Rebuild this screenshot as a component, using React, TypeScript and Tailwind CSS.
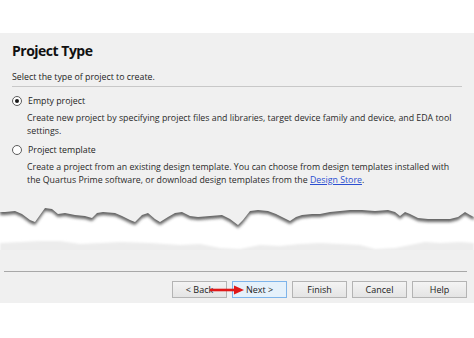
import React from 'react';

const upperEdge: [number, number][] = [
  [0, 17], [5, 17], [15, 16], [22, 19], [30, 25], [35, 27], [40, 20], [45, 13], [52, 14], [58, 19],
  [65, 18], [75, 20], [85, 21], [92, 23], [97, 18], [103, 17], [115, 18], [122, 21], [130, 25], [135, 27],
  [142, 20], [148, 18], [155, 24], [160, 27], [168, 22], [175, 18], [182, 17], [190, 21], [198, 22], [210, 21],
  [222, 20], [230, 24], [238, 30], [243, 25], [250, 16], [258, 15], [268, 16], [276, 19], [282, 22], [290, 26],
  [296, 22], [302, 20], [312, 19], [320, 19], [330, 17], [340, 16], [350, 15], [362, 15], [375, 16], [388, 15],
  [395, 17], [400, 21], [405, 17], [410, 19], [418, 23], [428, 24], [440, 24], [450, 24], [458, 22], [465, 17],
  [470, 20], [474, 22],
];

const lowerEdge: [number, number][] = [
  [0, 48], [20, 47], [40, 46], [60, 46], [80, 49], [100, 48], [120, 47], [150, 48], [180, 50], [200, 49],
  [220, 53], [240, 54], [260, 50], [280, 51], [300, 49], [320, 48], [340, 49], [360, 50], [375, 54], [395, 53],
  [410, 50], [425, 47], [440, 48], [460, 47], [474, 48],
];

const toPoints = (pts: [number, number][]) => pts.map(([x, y]) => `${x},${y}`).join(' ');

// torn paper between the two halves of the dialog
const TornEdge = () => (
  <svg width="474" height="57" viewBox="0 0 474 57" className="block shrink-0">
    <defs>
      <filter id="tearShadow" x="-5%" y="-50%" width="110%" height="200%">
        <feGaussianBlur stdDeviation="1.5" />
      </filter>
      <filter id="softEdge" x="-5%" y="-50%" width="110%" height="200%">
        <feGaussianBlur stdDeviation="1" />
      </filter>
    </defs>
    <rect x="0" y="0" width="474" height="57" fill="#ffffff" />
    <polygon
      points={`0,0 474,0 ${toPoints(upperEdge.map(([x, y]) => [x, y + 3]).reverse() as [number, number][])}`}
      fill="#555555"
      opacity="0.9"
      filter="url(#tearShadow)"
    />
    <polygon points={`0,0 474,0 ${toPoints([...upperEdge].reverse())}`} fill="#f0f0f0" />
    <polygon
      points={`0,57 474,57 ${toPoints([...lowerEdge].reverse())}`}
      fill="#ececec"
      filter="url(#softEdge)"
    />
    <rect x="0" y="55" width="474" height="2" fill="#f0f0f0" />
  </svg>
);

const Radio = ({ checked }: { checked?: boolean }) => (
  <span className="w-[10px] h-[10px] rounded-full border border-[#5c5c5c] bg-white flex items-center justify-center shrink-0">
    {checked && <span className="w-[4px] h-[4px] rounded-full bg-[#1a1a1a]" />}
  </span>
);

const Btn = ({ label, primary }: { label: string; primary?: boolean }) => (
  <div
    className={`w-[55px] h-[17px] flex items-center justify-center text-[9px] text-[#222] border ${
      primary ? 'border-[#7eb4ea] bg-[#e5f1fb]' : 'border-[#b4b4b4] bg-gradient-to-b from-[#f4f4f4] to-[#e4e4e4]'
    }`}
  >
    {label}
  </div>
);

export default function App() {
  return (
    <div className="w-[474px] h-[338px] bg-white flex flex-col overflow-hidden font-['Open_Sans',sans-serif] text-[#1e1e1e]">
      <div className="h-[33px] shrink-0" />

      {/* upper page */}
      <div className="h-[162px] shrink-0 bg-[#f0f0f0] pl-[12px] pr-[12px] pt-[8px]">
        <h1 className="text-[14px] font-bold leading-[20px] tracking-[-0.5px] text-[#111]">Project Type</h1>
        <p className="text-[8.8px] leading-[12px] mt-[10px]">Select the type of project to create.</p>
        <div className="h-px bg-[#c8c8c8] mt-[3px]" />

        <div className="flex items-center gap-[6px] mt-[8px]">
          <Radio checked />
          <span className="text-[8.8px] leading-[12px]">Empty project</span>
        </div>
        <p className="text-[8.8px] leading-[13px] ml-[15px] mt-[5px] whitespace-nowrap text-[#2a2a2a]">
          Create new project by specifying project files and libraries, target device family and device, and EDA tool
          <br />
          settings.
        </p>

        <div className="flex items-center gap-[6px] mt-[6px]">
          <Radio />
          <span className="text-[8.8px] leading-[12px]">Project template</span>
        </div>
        <p className="text-[8.8px] leading-[12.5px] ml-[15px] mt-[5px] whitespace-nowrap text-[#2a2a2a]">
          Create a project from an existing design template. You can choose from design templates installed with
          <br />
          the Quartus Prime software, or download design templates from the{' '}
          <a className="text-[#2b4fd1] underline">Design Store</a>.
        </p>
      </div>

      <TornEdge />

      {/* lower page */}
      <div className="h-[51px] shrink-0 bg-[#f0f0f0] flex flex-col pl-[4px] pr-[7px]">
        <div className="h-px bg-[#a8a8a8] mt-[19px]" />
        <div className="relative flex justify-end gap-[5px] mt-[9px]">
          <Btn label="< Back" />
          <Btn label="Next >" primary />
          <Btn label="Finish" />
          <Btn label="Cancel" />
          <Btn label="Help" />
          {/* red arrow pointing at Next */}
          <svg width="36" height="10" viewBox="0 0 36 10" className="absolute left-[205px] top-[4px]">
            <line x1="1" y1="5" x2="27" y2="5" stroke="#e01818" strokeWidth="2.6" />
            <polygon points="25,0.5 35,5 25,9.5" fill="#e01818" />
          </svg>
        </div>
      </div>
    </div>
  );
}
